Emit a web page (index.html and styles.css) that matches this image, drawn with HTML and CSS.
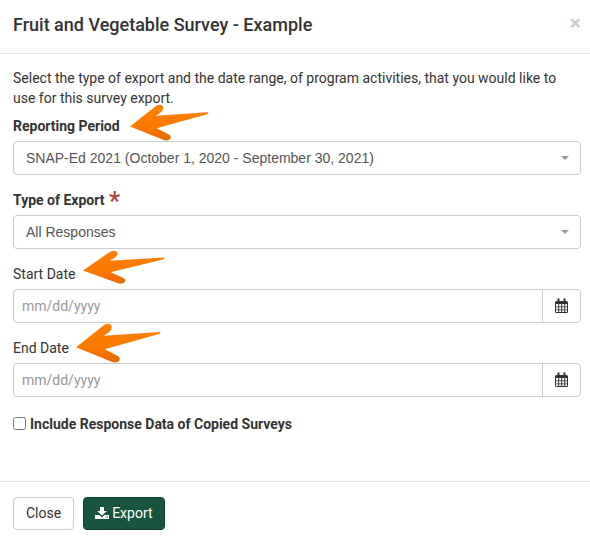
FILE: index.html
```html
<!DOCTYPE html>
<html lang="en">
<head>
    <meta charset="UTF-8">
    <title>Fruit and Vegetable Survey - Example</title>
    <link rel="stylesheet" href="styles.css">
</head>
<body>
<div class="modal">
    <div class="modal-header">
        <h1>Fruit and Vegetable Survey - Example</h1>
        <span class="close-x">&times;</span>
    </div>
    <div class="modal-body">
        <p class="intro">Select the type of export and the date range, of program activities, that you would like to use for this survey export.</p>

        <div class="field field-first">
            <label class="bold">Reporting Period</label>
            <svg class="arrow arrow-period" viewBox="0 0 80 38" preserveAspectRatio="none"><use href="#arrow-shape"/></svg>
            <div class="select"><span>SNAP-Ed 2021 (October 1, 2020 - September 30, 2021)</span><i class="caret"></i></div>
        </div>

        <div class="field">
            <label class="bold">Type of Export <span class="required">*</span></label>
            <div class="select"><span>All Responses</span><i class="caret"></i></div>
        </div>

        <div class="field">
            <label>Start Date</label>
            <svg class="arrow arrow-start" viewBox="0 0 80 38" preserveAspectRatio="none"><use href="#arrow-shape"/></svg>
            <div class="date-group">
                <input type="text" placeholder="mm/dd/yyyy">
                <span class="addon"><svg class="cal" viewBox="0 0 13 15"><use href="#cal-shape"/></svg></span>
            </div>
        </div>

        <div class="field">
            <label>End Date</label>
            <svg class="arrow arrow-end" viewBox="0 0 80 38" preserveAspectRatio="none"><use href="#arrow-shape"/></svg>
            <div class="date-group">
                <input type="text" placeholder="mm/dd/yyyy">
                <span class="addon"><svg class="cal" viewBox="0 0 13 15"><use href="#cal-shape"/></svg></span>
            </div>
        </div>

        <label class="check bold"><input type="checkbox">Include Response Data of Copied Surveys</label>
    </div>
    <div class="modal-footer">
        <button class="btn">Close</button>
        <button class="btn btn-export">
            <svg class="dl" viewBox="0 0 14 12"><path d="M5 0h4v4h3L7 8.500 2 4h3zM0 8h4.500L7 10.500 9.500 8H14v4H0zM10.500 9.500h1v1h-1zM12 9.500h1v1h-1z" fill-rule="evenodd"/></svg>
            Export
        </button>
    </div>
</div>

<svg class="defs" width="0" height="0">
    <defs>
        <linearGradient id="arrow-fill" x1="0" y1="0" x2="0" y2="1">
            <stop offset="0" stop-color="#ff8000"/>
            <stop offset="0.6" stop-color="#fb7a00"/>
            <stop offset="1" stop-color="#e86800"/>
        </linearGradient>
        <symbol id="arrow-shape" viewBox="0 0 80 38" preserveAspectRatio="none">
            <path d="M0 23 L25 3 Q30 -1 33 2 Q35 6 30 9.500 L26 12 L79 8.500 Q80 9.500 78 10.500 L27 25 L39 31 Q43 33.500 40 36.500 Q37 38.500 33 36.500 Z" fill="url(#arrow-fill)"/>
        </symbol>
        <symbol id="cal-shape" viewBox="0 0 13 15">
            <path d="M0 4.500Q0 3 1.500 3H2.500V0.500h2V3h4V0.500h2V3h1Q13 3 13 4.500V13.500Q13 15 11.500 15H1.500Q0 15 0 13.500zM1 6v2.400h2.200V6zM4.200 6v2.400h2V6zM7.200 6v2.400h2V6zM10.200 6v2.400H12V6zM1 9.200v2.200h2.200V9.200zM4.200 9.200v2.200h2V9.200zM7.200 9.200v2.200h2V9.200zM10.200 9.200v2.200H12V9.200zM1 12.200V14h2.200v-1.800zM4.200 12.200V14h2v-1.800zM7.200 12.200V14h2v-1.800zM10.200 12.200V14H12v-1.800z" fill-rule="evenodd"/>
        </symbol>
    </defs>
</svg>
</body>
</html>
```

FILE: styles.css
```css
* {
    box-sizing: border-box;
}
body {
    margin: 0;
    background-color: #fff;
    color: #333;
    font-family: Roboto, "Liberation Sans", sans-serif;
    font-size: 14px;
    line-height: 20px;
    overflow: hidden;
}
.modal {
    width: 590px;
    height: 541px;
    display: flex;
    flex-direction: column;
    position: relative;
}
.modal-header {
    height: 54px;
    flex: none;
    padding: 0 13px 4px;
    display: flex;
    align-items: center;
    justify-content: space-between;
    border-bottom: 1px solid #e5e5e5;
}
h1 {
    margin: 0;
    font-size: 18px;
    font-weight: 500;
    color: #333;
}
.close-x {
    color: #ccc;
    font-size: 21px;
    font-weight: 700;
    margin-right: -4px;
    margin-top: -4px;
}
.modal-body {
    flex: 1;
    padding: 15px 9px 0 13px;
}
.intro {
    margin: 0;
    line-height: 19.500px;
}
.field {
    margin-top: 15px;
    position: relative;
}
.field-first {
    margin-top: 8px;
}
.field label {
    display: block;
    height: 20px;
    margin-bottom: 5px;
}
.bold {
    font-weight: 700;
    color: #333;
}
.required {
    color: #a5443a;
    font-size: 25px;
    line-height: 20px;
    font-weight: 500;
    margin-left: 1px;
    vertical-align: -5px;
}
.select,
.date-group {
    height: 34px;
    display: flex;
    border: 1px solid #ccc;
    border-radius: 4px;
    background-color: #fff;
}
.select {
    align-items: center;
    justify-content: space-between;
    padding: 0 12px;
    color: #555;
    font-family: "Liberation Sans", Arial, sans-serif;
}
.caret {
    width: 0;
    height: 0;
    margin-right: -1px;
    border-left: 4px solid transparent;
    border-right: 4px solid transparent;
    border-top: 4px solid #999;
}
.date-group input {
    flex: 1;
    min-width: 0;
    border: none;
    outline: none;
    padding: 0 8px;
    background: none;
    border-radius: 4px;
    font-family: inherit;
    font-size: 14px;
    color: #555;
}
.date-group input::placeholder {
    color: #999;
    opacity: 1;
}
.addon {
    width: 38px;
    flex: none;
    display: flex;
    align-items: center;
    justify-content: center;
    padding-bottom: 2px;
    border-left: 1px solid #ccc;
}
.cal {
    width: 13px;
    height: 15px;
    fill: #333;
}
.check {
    display: flex;
    align-items: center;
    margin-top: 17px;
}
.check input {
    width: 13px;
    height: 13px;
    margin: 0 4px 2px 0;
}
.modal-footer {
    height: 60px;
    flex: none;
    padding: 15px 13px 0;
    display: flex;
    align-items: flex-start;
    gap: 9px;
    border-top: 1px solid #e5e5e5;
}
.btn {
    height: 33px;
    padding: 0 12px 1px;
    border: 1px solid #ccc;
    border-radius: 4px;
    background-color: #fff;
    color: #333;
    font-family: inherit;
    font-size: 14px;
    display: flex;
    align-items: center;
    gap: 3px;
}
.btn-export {
    padding-left: 11px;
    padding-right: 11px;
    background-color: #19543e;
    border-color: #123f2e;
    color: #fff;
}
.dl {
    width: 14px;
    height: 12px;
    fill: #fff;
}
.defs {
    position: absolute;
}
/* arrows drawn over the form */
.arrow {
    position: absolute;
    pointer-events: none;
}
.arrow-period {
    left: 117px;
    top: -12px;
    width: 79px;
    height: 37px;
}
.arrow-start {
    left: 70px;
    top: -14px;
    width: 82px;
    height: 34px;
}
.arrow-end {
    left: 63px;
    top: -15px;
    width: 85px;
    height: 40px;
}
```
